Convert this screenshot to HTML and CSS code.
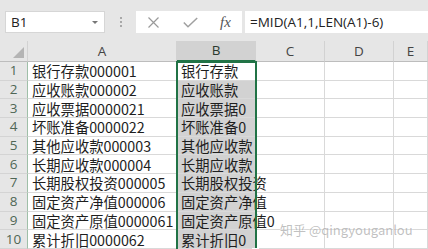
FILE: index.html
```html
<!DOCTYPE html>
<html>
<head>
<meta charset="utf-8">
<link rel="stylesheet" href="styles.css">
</head>
<body>
<div class="toolbar">
  <div class="namebox"><span class="ref">B1</span><span class="caret"></span></div>
  <div class="dots"><i></i><i></i><i></i></div>
  <div class="fbtns">
    <span class="ico x"><svg width="11" height="11" viewBox="0 0 11 11"><path d="M0.5 0.5 L10.5 10.5 M10.5 0.5 L0.5 10.5" stroke="#9a9a9a" stroke-width="1.2" fill="none"/></svg></span>
    <span class="ico ok"><svg width="15" height="11" viewBox="0 0 15 11"><path d="M0.8 5.5 L5 9.8 L14.2 1" stroke="#a0a0a0" stroke-width="1.5" fill="none"/></svg></span>
    <span class="fx">fx</span>
  </div>
  <div class="fbar"><span class="formula">=MID(A1,1,LEN(A1)-6)</span></div>
</div>
<div class="sheet">
  <div class="corner"><span class="tri"></span></div>
  <div class="ch">A</div>
  <div class="ch sel">B</div>
  <div class="ch">C</div>
  <div class="ch">D</div>
  <div class="ch">E</div>

  <div class="rh">1</div><div class="c">银行存款000001</div><div class="c b act">银行存款</div><div class="c"></div><div class="c"></div><div class="c"></div>
  <div class="rh">2</div><div class="c">应收账款000002</div><div class="c b">应收账款</div><div class="c"></div><div class="c"></div><div class="c"></div>
  <div class="rh">3</div><div class="c">应收票据0000021</div><div class="c b">应收票据0</div><div class="c"></div><div class="c"></div><div class="c"></div>
  <div class="rh">4</div><div class="c">坏账准备0000022</div><div class="c b">坏账准备0</div><div class="c"></div><div class="c"></div><div class="c"></div>
  <div class="rh">5</div><div class="c">其他应收款000003</div><div class="c b">其他应收款</div><div class="c"></div><div class="c"></div><div class="c"></div>
  <div class="rh">6</div><div class="c">长期应收款000004</div><div class="c b">长期应收款</div><div class="c"></div><div class="c"></div><div class="c"></div>
  <div class="rh">7</div><div class="c">长期股权投资000005</div><div class="c b">长期股权投资</div><div class="c"></div><div class="c"></div><div class="c"></div>
  <div class="rh">8</div><div class="c">固定资产净值000006</div><div class="c b">固定资产净值</div><div class="c"></div><div class="c"></div><div class="c"></div>
  <div class="rh">9</div><div class="c">固定资产原值0000061</div><div class="c b">固定资产原值0</div><div class="c"></div><div class="c"></div><div class="c"></div>
  <div class="rh">10</div><div class="c">累计折旧0000062</div><div class="c b">累计折旧0</div><div class="c"></div><div class="c"></div><div class="c"></div>

  <div class="selection"><span class="handle"></span></div>
</div>
<div class="watermark">知乎 @qingyouganlou</div>
</body>
</html>
```

FILE: styles.css
```css
html, body {
  margin: 0;
  padding: 0;
}
body {
  width: 428px;
  height: 249px;
  overflow: hidden;
  background: #ffffff;
  font-family: "Noto Sans CJK SC", "Noto Sans", sans-serif;
  position: relative;
}

/* ---------- formula toolbar ---------- */
.toolbar {
  height: 41px;
  background: #e6e6e6;
  display: flex;
  align-items: flex-start;
  padding: 11px 0 0 5px;
  box-sizing: border-box;
}
.namebox {
  width: 100px;
  height: 22px;
  background: #fff;
  border: 1px solid #d6d6d6;
  box-sizing: border-box;
  display: flex;
  align-items: center;
  justify-content: space-between;
  padding: 0 6px 0 5px;
}
.ref {
  font-family: "Open Sans", sans-serif;
  font-size: 13.5px;
  line-height: 18px;
  color: #222;
}
.caret {
  width: 0;
  height: 0;
  border-left: 3px solid transparent;
  border-right: 3px solid transparent;
  border-top: 3px solid #777;
}
.dots {
  width: 31px;
  height: 22px;
  display: flex;
  flex-direction: column;
  align-items: center;
  justify-content: center;
  gap: 2px;
}
.dots i {
  display: block;
  width: 2px;
  height: 2px;
  background: #a8a8a8;
}
.fbtns {
  width: 106px;
  height: 22px;
  background: #fff;
  display: flex;
  align-items: center;
  padding-left: 12px;
  box-sizing: border-box;
}
.ico {
  display: flex;
  align-items: center;
}
.ico.x {
  width: 35px;
}
.ico.ok {
  width: 37px;
}
.fx {
  font-family: "Liberation Serif", serif;
  font-style: italic;
  font-size: 15px;
  line-height: 20px;
  color: #555;
}
.fbar {
  flex: 1;
  height: 22px;
  margin-left: 3px;
  background: #fff;
  display: flex;
  align-items: center;
  padding-left: 5px;
}
.formula {
  font-family: "Open Sans", sans-serif;
  font-size: 13.5px;
  line-height: 18px;
  color: #222;
  white-space: nowrap;
}

/* ---------- sheet ---------- */
.sheet {
  position: relative;
  display: grid;
  grid-template-columns: 28px 149px 79px 69px 69px 1fr;
  grid-template-rows: 21px repeat(10, 18.7px);
}
.corner, .ch {
  background: #e6e6e6;
  border-right: 1px solid #d2d2d2;
  border-bottom: 1px solid #bdbdbd;
  box-sizing: border-box;
}
.corner {
  position: relative;
}
.tri {
  position: absolute;
  right: 3px;
  bottom: 3px;
  width: 0;
  height: 0;
  border-left: 11px solid transparent;
  border-bottom: 11px solid #b4b4b4;
}
.ch {
  display: flex;
  align-items: center;
  justify-content: center;
  font-family: "Open Sans", sans-serif;
  font-size: 13.5px;
  line-height: 17px;
  color: #444;
}
.ch.sel {
  background: #d2d2d2;
  border-bottom: 2px solid #217346;
  color: #2b3a2f;
}
.rh {
  background: #e6e6e6;
  border-right: 1px solid #9fbfa8;
  border-bottom: 1px solid #d4d4d4;
  box-sizing: border-box;
  display: flex;
  align-items: center;
  justify-content: center;
  font-family: "Open Sans", sans-serif;
  font-size: 13.5px;
  line-height: 17px;
  color: #4f6655;
}
.c {
  border-right: 1px solid #d9d9d9;
  border-bottom: 1px solid #d9d9d9;
  box-sizing: border-box;
  display: flex;
  align-items: center;
  padding-left: 4px;
  font-size: 14.3px;
  line-height: 17px;
  color: #1e1e1e;
  white-space: nowrap;
  overflow: visible;
  min-width: 0;
}
.c.b {
  background: #d2d2d2;
}
.c.b.act {
  background: #fff;
}
.selection {
  position: absolute;
  left: 176px;
  top: 20px;
  width: 81px;
  height: 200px;
  border: 2px solid #217346;
  box-sizing: border-box;
  pointer-events: none;
}
.handle {
  position: absolute;
  right: -4px;
  top: 185px;
  width: 5px;
  height: 5px;
  background: #217346;
  border: 1px solid #fff;
}

/* ---------- watermark ---------- */
.watermark {
  position: absolute;
  left: 280px;
  top: 221px;
  font-size: 13px;
  line-height: 17px;
  color: rgba(140, 140, 140, 0.55);
  text-shadow: 0 0 2px #fff;
  white-space: nowrap;
}
```
